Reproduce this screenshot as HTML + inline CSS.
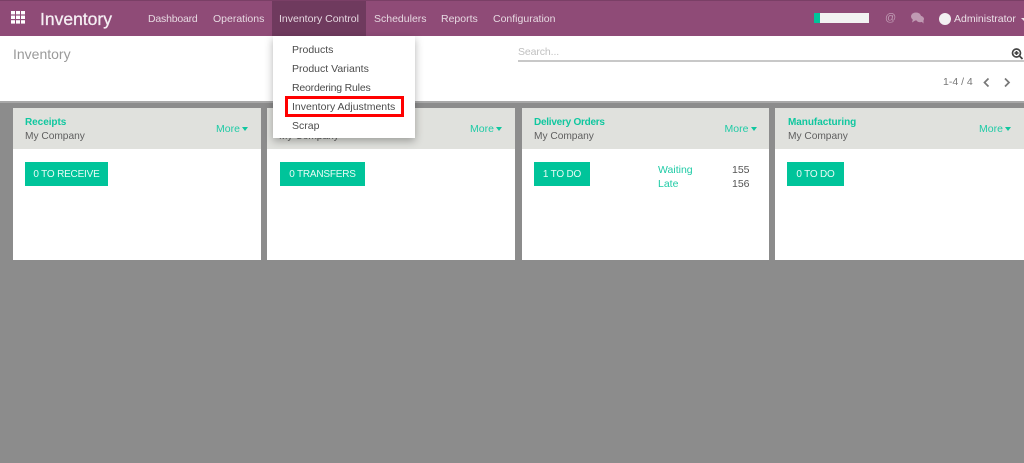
<!DOCTYPE html>
<html><head><meta charset="utf-8"><style>
html,body{margin:0;padding:0;width:1024px;height:463px;overflow:hidden;background:#8c8c8c;font-family:"Liberation Sans",sans-serif}
#w{position:absolute;left:0;top:0;width:1024px;height:463px;filter:blur(.35px)}
.a{position:absolute;white-space:nowrap}
.t{font-size:10.5px;line-height:14px}
.nav{color:#e6d8e1;top:12px}
.card{position:absolute;top:108px;width:248px;height:152px;background:#fff}
.hd{position:absolute;left:0;top:0;width:100%;height:41px;background:#e0e1dd}
.title{position:absolute;left:12px;top:8px;font-size:10px;line-height:14px;font-weight:bold;color:#10c79f;letter-spacing:-.05px}
.co{position:absolute;left:12px;top:22px;font-size:10.2px;line-height:14px;color:#5f5f5f;letter-spacing:-.02px}
.more{position:absolute;left:203px;top:14px;font-size:10.5px;line-height:14px;color:#1fcba6}
.car{position:absolute;left:229px;top:19px;width:0;height:0;border:3.5px solid transparent;border-top:4px solid #10c79f;border-bottom:0}
.btn{position:absolute;left:12px;top:54px;height:24px;line-height:25px;background:#00c49a;color:#e8fbf6;font-size:10px;letter-spacing:-.2px;text-align:center}
.mi{left:292px;color:#4c4c4c;font-size:10.5px;line-height:14px}
</style></head><body><div id="w">
<div class="a" style="left:0;top:0;width:1024px;height:36px;background:#8f4b77;border-top:1px solid #7a3f66;box-sizing:border-box"></div>
<svg class="a" style="left:11px;top:11px" width="14" height="13" fill="#fff"><rect width="4" height="3.4"/><rect x="5" width="4" height="3.4"/><rect x="10" width="4" height="3.4"/><rect y="4.6" width="4" height="3.4"/><rect x="5" y="4.6" width="4" height="3.4"/><rect x="10" y="4.6" width="4" height="3.4"/><rect y="9.200" width="4" height="3.4"/><rect x="5" y="9.200" width="4" height="3.4"/><rect x="10" y="9.200" width="4" height="3.4"/></svg>
<div class="a" style="left:40px;top:8px;font-size:17.500px;line-height:22px;color:#f5eef3;-webkit-text-stroke:.3px #f5eef3">Inventory</div>
<div class="a t nav" style="left:148px;letter-spacing:-.2px">Dashboard</div>
<div class="a t nav" style="left:213px">Operations</div>
<div class="a" style="left:272px;top:1px;width:94px;height:35px;background:#6f3a5e"></div>
<div class="a t nav" style="left:279px">Inventory Control</div>
<div class="a t nav" style="left:374px">Schedulers</div>
<div class="a t nav" style="left:441px">Reports</div>
<div class="a t nav" style="left:493px">Configuration</div>
<div class="a" style="left:814px;top:13px;width:55px;height:10px;background:#f2f2f2"></div>
<div class="a" style="left:814px;top:13px;width:6px;height:10px;background:#00c49a"></div>
<div class="a" style="left:885px;top:11px;font-size:11px;line-height:14px;color:#c09ab3">@</div>
<svg class="a" style="left:911px;top:12px" width="13" height="12" fill="#c09ab3"><ellipse cx="5" cy="4.500" rx="5" ry="4"/><ellipse cx="9" cy="7" rx="4" ry="3.200"/><path d="M2 7L1 10.500 5 8zM10 9l2.500 2.500V8z"/></svg>
<div class="a" style="left:939px;top:13px;width:12px;height:12px;border-radius:50%;background:#f3f0f2"></div>
<div class="a t" style="left:954px;top:12px;color:#ece1e8">Administrator</div>
<div class="a" style="left:1021px;top:18px;width:0;height:0;border:3px solid transparent;border-top:3px solid #ece1e8;border-bottom:0"></div>
<div class="a" style="left:0;top:36px;width:1024px;height:65px;background:#fff"></div>
<div class="a" style="left:0;top:101px;width:1024px;height:2px;background:#a8a8a8"></div>
<div class="a" style="left:13px;top:45px;font-size:14px;line-height:18px;color:#9a9a9a">Inventory</div>
<div class="a" style="left:518px;top:46px;font-size:10.5px;line-height:13px;color:#c0c0c0;letter-spacing:-.1px">Search...</div>
<div class="a" style="left:518px;top:60px;width:506px;height:2px;background:#c8c8c8"></div>
<svg class="a" style="left:1010px;top:47px" width="14" height="14" fill="none" stroke="#444" stroke-width="1.700"><circle cx="6.500" cy="6" r="4"/><path d="M9.500 9l3 3M4.500 6h4M6.500 4v4"/></svg>
<div class="a t" style="left:943px;top:75px;color:#777">1-4 / 4</div>
<svg class="a" style="left:982px;top:77px" width="32" height="11" fill="none" stroke="#777" stroke-width="1.700"><path d="M6.500 1.500L2.500 5.500 6.500 9.500M23 1.500L27 5.500 23 9.500"/></svg>
<div class="card" style="left:13px"><div class="hd"></div><div class="title">Receipts</div><div class="co">My Company</div><div class="more">More</div><div class="car"></div><div class="btn" style="width:83px">0 TO RECEIVE</div></div>
<div class="card" style="left:267px"><div class="hd"></div><div class="title">Internal Transfers</div><div class="co">My Company</div><div class="more">More</div><div class="car"></div><div class="btn" style="left:13px;width:85px">0 TRANSFERS</div></div>
<div class="card" style="left:521.500px;width:247.500px"><div class="hd"></div><div class="title" style="left:12.500px;letter-spacing:-.25px">Delivery Orders</div><div class="co" style="left:12.500px">My Company</div><div class="more">More</div><div class="car"></div><div class="btn" style="left:12.500px;width:56px">1 TO DO</div>
<div class="a t" style="left:136.500px;top:55px;color:#1fcba6">Waiting</div><div class="a t" style="left:136.500px;top:69px;color:#1fcba6">Late</div><div class="a t" style="left:210.500px;top:55px;color:#555">155</div><div class="a t" style="left:210.500px;top:69px;color:#555">156</div></div>
<div class="card" style="left:775px;width:249px"><div class="hd"></div><div class="title" style="left:13px">Manufacturing</div><div class="co" style="left:13px">My Company</div><div class="more" style="left:204px">More</div><div class="car" style="left:230px"></div><div class="btn" style="width:57px">0 TO DO</div></div>
<div class="a" style="left:273px;top:36px;width:142px;height:102px;background:#fff;box-shadow:0 3px 8px rgba(0,0,0,.3)"></div>
<div class="a mi" style="top:43px">Products</div>
<div class="a mi" style="top:62px">Product Variants</div>
<div class="a mi" style="top:81px;letter-spacing:-.2px">Reordering Rules</div>
<div class="a mi" style="top:100px">Inventory Adjustments</div>
<div class="a mi" style="top:119px">Scrap</div>
<div class="a" style="left:285px;top:96px;width:119px;height:21px;border:3px solid #f00;box-sizing:border-box"></div>
</div></body></html>
